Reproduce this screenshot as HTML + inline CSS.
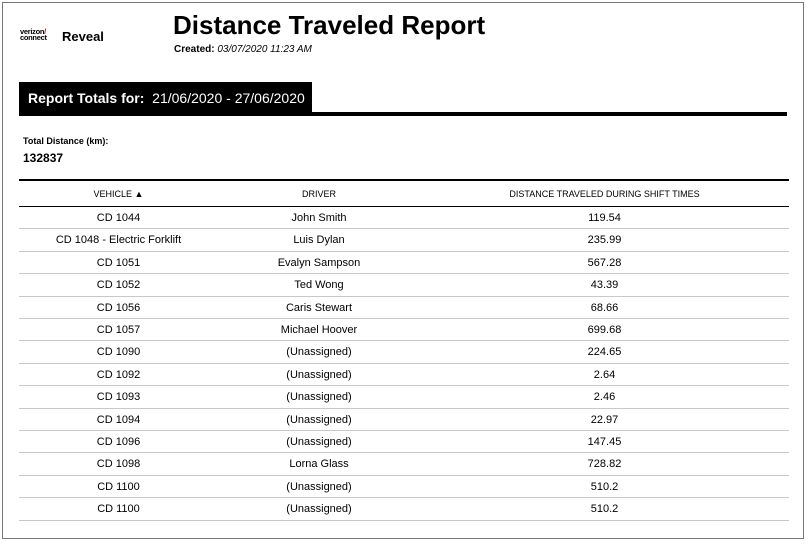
<!DOCTYPE html>
<html><head><meta charset="utf-8"><style>
*{margin:0;padding:0;box-sizing:border-box}
body{width:810px;height:545px;background:#fff;font-family:"Liberation Sans",Arial,sans-serif;color:#000;position:relative;overflow:hidden}
.frame{position:absolute;left:2px;top:2px;width:802px;height:537px;border:1px solid #777}
.abs{position:absolute;white-space:nowrap}
.row{position:absolute;left:19px;width:770px;height:22.4px;border-bottom:1px solid #c8c8c8;font-size:11px;line-height:23px}
.row span{position:absolute;text-align:center}
.c1{left:0;width:199px}.c2{left:199px;width:202px}.c3{left:401px;width:369px}
</style></head><body>
<div class="frame"></div>
<div class="abs" style="left:20px;top:29px;font-size:7.5px;line-height:6px;letter-spacing:-0.3px;font-weight:bold">verizon<span style="color:#c00">/</span><br>connect</div>
<div class="abs" style="left:62px;top:29px;font-size:13px;font-weight:bold">Reveal</div>
<div class="abs" style="left:173px;top:10px;font-size:26px;font-weight:bold">Distance Traveled Report</div>
<div class="abs" style="left:174px;top:44px;font-size:10px"><b>Created:</b> <i>03/07/2020 11:23 AM</i></div>
<div class="abs" style="left:19px;top:82px;width:293px;height:34px;background:#000"></div>
<div class="abs" style="left:19px;top:112px;width:768px;height:4px;background:#000"></div>
<div class="abs" style="left:28px;top:90px;font-size:14px;color:#fff"><b>Report Totals for:</b>&nbsp; 21/06/2020 - 27/06/2020</div>
<div class="abs" style="left:23px;top:136px;font-size:9px;font-weight:bold">Total Distance (km):</div>
<div class="abs" style="left:23px;top:151px;font-size:12px;font-weight:bold">132837</div>
<div class="abs" style="left:19px;top:179px;width:770px;height:2px;background:#000"></div>
<div class="row" style="top:183px;border-bottom:1px solid #000;height:24px;font-size:9px"><span class="c1">VEHICLE ▲</span><span class="c2">DRIVER</span><span class="c3">DISTANCE TRAVELED DURING SHIFT TIMES</span></div>
<div class="row" style="top:207px"><span class="c1">CD 1044</span><span class="c2">John Smith</span><span class="c3">119.54</span></div>
<div class="row" style="top:229.4px"><span class="c1">CD 1048 - Electric Forklift</span><span class="c2">Luis Dylan</span><span class="c3">235.99</span></div>
<div class="row" style="top:251.8px"><span class="c1">CD 1051</span><span class="c2">Evalyn Sampson</span><span class="c3">567.28</span></div>
<div class="row" style="top:274.2px"><span class="c1">CD 1052</span><span class="c2">Ted Wong</span><span class="c3">43.39</span></div>
<div class="row" style="top:296.6px"><span class="c1">CD 1056</span><span class="c2">Caris Stewart</span><span class="c3">68.66</span></div>
<div class="row" style="top:319px"><span class="c1">CD 1057</span><span class="c2">Michael Hoover</span><span class="c3">699.68</span></div>
<div class="row" style="top:341.4px"><span class="c1">CD 1090</span><span class="c2">(Unassigned)</span><span class="c3">224.65</span></div>
<div class="row" style="top:363.8px"><span class="c1">CD 1092</span><span class="c2">(Unassigned)</span><span class="c3">2.64</span></div>
<div class="row" style="top:386.2px"><span class="c1">CD 1093</span><span class="c2">(Unassigned)</span><span class="c3">2.46</span></div>
<div class="row" style="top:408.6px"><span class="c1">CD 1094</span><span class="c2">(Unassigned)</span><span class="c3">22.97</span></div>
<div class="row" style="top:431px"><span class="c1">CD 1096</span><span class="c2">(Unassigned)</span><span class="c3">147.45</span></div>
<div class="row" style="top:453.4px"><span class="c1">CD 1098</span><span class="c2">Lorna Glass</span><span class="c3">728.82</span></div>
<div class="row" style="top:475.8px"><span class="c1">CD 1100</span><span class="c2">(Unassigned)</span><span class="c3">510.2</span></div>
<div class="row" style="top:498.2px"><span class="c1">CD 1100</span><span class="c2">(Unassigned)</span><span class="c3">510.2</span></div>
</body></html>
